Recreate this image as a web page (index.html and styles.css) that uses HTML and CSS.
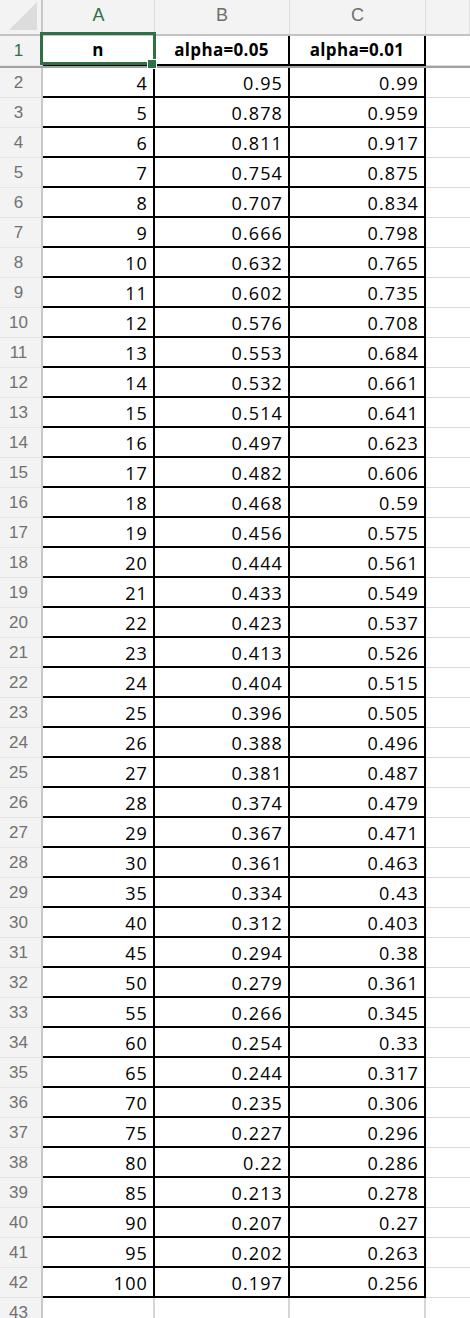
FILE: index.html
```html
<!DOCTYPE html>
<html>
<head>
<meta charset="utf-8">
<link rel="stylesheet" href="styles.css">
</head>
<body>
<div class="sheet">
  <div class="row hdr">
    <div class="corner"><svg width="41" height="32" viewBox="0 0 41 32"><polygon points="9,30 37,30 37,2" fill="#dcdcdc"/></svg></div>
    <div class="ch a sel">A</div>
    <div class="ch b">B</div>
    <div class="ch c">C</div>
    <div class="ch d"></div>
  </div>
  <div class="row r1">
    <div class="rn sel">1</div>
    <div class="cell a head">n</div>
    <div class="cell b head">alpha=0.05</div>
    <div class="cell c head">alpha=0.01</div>
    <div class="cell d"></div>
  </div>
  <div class="freeze"></div>
  <div class="row"><div class="rn">2</div><div class="cell a">4</div><div class="cell b">0.95</div><div class="cell c">0.99</div><div class="cell d"></div></div>
  <div class="row"><div class="rn">3</div><div class="cell a">5</div><div class="cell b">0.878</div><div class="cell c">0.959</div><div class="cell d"></div></div>
  <div class="row"><div class="rn">4</div><div class="cell a">6</div><div class="cell b">0.811</div><div class="cell c">0.917</div><div class="cell d"></div></div>
  <div class="row"><div class="rn">5</div><div class="cell a">7</div><div class="cell b">0.754</div><div class="cell c">0.875</div><div class="cell d"></div></div>
  <div class="row"><div class="rn">6</div><div class="cell a">8</div><div class="cell b">0.707</div><div class="cell c">0.834</div><div class="cell d"></div></div>
  <div class="row"><div class="rn">7</div><div class="cell a">9</div><div class="cell b">0.666</div><div class="cell c">0.798</div><div class="cell d"></div></div>
  <div class="row"><div class="rn">8</div><div class="cell a">10</div><div class="cell b">0.632</div><div class="cell c">0.765</div><div class="cell d"></div></div>
  <div class="row"><div class="rn">9</div><div class="cell a">11</div><div class="cell b">0.602</div><div class="cell c">0.735</div><div class="cell d"></div></div>
  <div class="row"><div class="rn">10</div><div class="cell a">12</div><div class="cell b">0.576</div><div class="cell c">0.708</div><div class="cell d"></div></div>
  <div class="row"><div class="rn">11</div><div class="cell a">13</div><div class="cell b">0.553</div><div class="cell c">0.684</div><div class="cell d"></div></div>
  <div class="row"><div class="rn">12</div><div class="cell a">14</div><div class="cell b">0.532</div><div class="cell c">0.661</div><div class="cell d"></div></div>
  <div class="row"><div class="rn">13</div><div class="cell a">15</div><div class="cell b">0.514</div><div class="cell c">0.641</div><div class="cell d"></div></div>
  <div class="row"><div class="rn">14</div><div class="cell a">16</div><div class="cell b">0.497</div><div class="cell c">0.623</div><div class="cell d"></div></div>
  <div class="row"><div class="rn">15</div><div class="cell a">17</div><div class="cell b">0.482</div><div class="cell c">0.606</div><div class="cell d"></div></div>
  <div class="row"><div class="rn">16</div><div class="cell a">18</div><div class="cell b">0.468</div><div class="cell c">0.59</div><div class="cell d"></div></div>
  <div class="row"><div class="rn">17</div><div class="cell a">19</div><div class="cell b">0.456</div><div class="cell c">0.575</div><div class="cell d"></div></div>
  <div class="row"><div class="rn">18</div><div class="cell a">20</div><div class="cell b">0.444</div><div class="cell c">0.561</div><div class="cell d"></div></div>
  <div class="row"><div class="rn">19</div><div class="cell a">21</div><div class="cell b">0.433</div><div class="cell c">0.549</div><div class="cell d"></div></div>
  <div class="row"><div class="rn">20</div><div class="cell a">22</div><div class="cell b">0.423</div><div class="cell c">0.537</div><div class="cell d"></div></div>
  <div class="row"><div class="rn">21</div><div class="cell a">23</div><div class="cell b">0.413</div><div class="cell c">0.526</div><div class="cell d"></div></div>
  <div class="row"><div class="rn">22</div><div class="cell a">24</div><div class="cell b">0.404</div><div class="cell c">0.515</div><div class="cell d"></div></div>
  <div class="row"><div class="rn">23</div><div class="cell a">25</div><div class="cell b">0.396</div><div class="cell c">0.505</div><div class="cell d"></div></div>
  <div class="row"><div class="rn">24</div><div class="cell a">26</div><div class="cell b">0.388</div><div class="cell c">0.496</div><div class="cell d"></div></div>
  <div class="row"><div class="rn">25</div><div class="cell a">27</div><div class="cell b">0.381</div><div class="cell c">0.487</div><div class="cell d"></div></div>
  <div class="row"><div class="rn">26</div><div class="cell a">28</div><div class="cell b">0.374</div><div class="cell c">0.479</div><div class="cell d"></div></div>
  <div class="row"><div class="rn">27</div><div class="cell a">29</div><div class="cell b">0.367</div><div class="cell c">0.471</div><div class="cell d"></div></div>
  <div class="row"><div class="rn">28</div><div class="cell a">30</div><div class="cell b">0.361</div><div class="cell c">0.463</div><div class="cell d"></div></div>
  <div class="row"><div class="rn">29</div><div class="cell a">35</div><div class="cell b">0.334</div><div class="cell c">0.43</div><div class="cell d"></div></div>
  <div class="row"><div class="rn">30</div><div class="cell a">40</div><div class="cell b">0.312</div><div class="cell c">0.403</div><div class="cell d"></div></div>
  <div class="row"><div class="rn">31</div><div class="cell a">45</div><div class="cell b">0.294</div><div class="cell c">0.38</div><div class="cell d"></div></div>
  <div class="row"><div class="rn">32</div><div class="cell a">50</div><div class="cell b">0.279</div><div class="cell c">0.361</div><div class="cell d"></div></div>
  <div class="row"><div class="rn">33</div><div class="cell a">55</div><div class="cell b">0.266</div><div class="cell c">0.345</div><div class="cell d"></div></div>
  <div class="row"><div class="rn">34</div><div class="cell a">60</div><div class="cell b">0.254</div><div class="cell c">0.33</div><div class="cell d"></div></div>
  <div class="row"><div class="rn">35</div><div class="cell a">65</div><div class="cell b">0.244</div><div class="cell c">0.317</div><div class="cell d"></div></div>
  <div class="row"><div class="rn">36</div><div class="cell a">70</div><div class="cell b">0.235</div><div class="cell c">0.306</div><div class="cell d"></div></div>
  <div class="row"><div class="rn">37</div><div class="cell a">75</div><div class="cell b">0.227</div><div class="cell c">0.296</div><div class="cell d"></div></div>
  <div class="row"><div class="rn">38</div><div class="cell a">80</div><div class="cell b">0.22</div><div class="cell c">0.286</div><div class="cell d"></div></div>
  <div class="row"><div class="rn">39</div><div class="cell a">85</div><div class="cell b">0.213</div><div class="cell c">0.278</div><div class="cell d"></div></div>
  <div class="row"><div class="rn">40</div><div class="cell a">90</div><div class="cell b">0.207</div><div class="cell c">0.27</div><div class="cell d"></div></div>
  <div class="row"><div class="rn">41</div><div class="cell a">95</div><div class="cell b">0.202</div><div class="cell c">0.263</div><div class="cell d"></div></div>
  <div class="row"><div class="rn">42</div><div class="cell a">100</div><div class="cell b">0.197</div><div class="cell c">0.256</div><div class="cell d"></div></div>
  <div class="row empty"><div class="rn">43</div><div class="cell a"></div><div class="cell b"></div><div class="cell c"></div><div class="cell d"></div></div>
  <div class="selection"></div>
  <div class="handle"></div>
</div>
</body>
</html>
```
FILE: styles.css
```css
html, body {
  margin: 0;
  padding: 0;
  background: #ffffff;
}
.sheet {
  position: relative;
  width: 470px;
  height: 1318px;
  overflow: hidden;
  font-family: "Open Sans", "Liberation Sans", sans-serif;
}
.row {
  display: flex;
  height: 30px;
}
.row > div {
  box-sizing: border-box;
  flex: none;
}
.a { width: 112px; }
.b { width: 135px; }
.c { width: 136px; }
.d { flex: 1 1 auto !important; }

/* column header row */
.hdr {
  height: 34px;
  background: #f3f3f3;
  border-bottom: 2px solid #c3c3c3;
}
.corner {
  width: 43px;
  border-right: 2px solid #c8c8c8;
}
.corner svg { display: block; }
.ch {
  border-right: 1px solid #dedede;
  text-align: center;
  font-family: "Liberation Sans", Arial, sans-serif;
  font-size: 18px;
  line-height: 30px;
  color: #6e6e6e;
}
.ch.sel { color: #2f7047; }

/* row numbers */
.rn {
  width: 43px;
  background: #f3f3f3;
  border-right: 2px solid #c8c8c8;
  border-bottom: 1px solid #e6e6e6;
  font-family: "Liberation Sans", Arial, sans-serif;
  font-size: 17px;
  color: #717171;
  text-align: center;
  padding-right: 4px;
  line-height: 30px;
}
.rn.sel { color: #2f7047; }

/* cells */
.cell {
  border-right: 2px solid #000;
  border-bottom: 2px solid #000;
  text-align: right;
  padding: 3px 5px 0 0;
  font-size: 18px;
  letter-spacing: 1.1px;
  line-height: 25px;
  color: #000;
  white-space: nowrap;
  overflow: hidden;
}
.cell.d {
  border-right: none;
  border-bottom: 1px solid #dadada;
}
.cell.head {
  font-weight: 700;
  text-align: center;
  padding: 0;
  line-height: 28px;
  letter-spacing: 0.3px;
  font-size: 17px;
}
.freeze {
  height: 2px;
  background: #a2a2a2;
}
.empty { height: 22px; }
.empty .cell {
  border-right: 2px solid #d6d6d6;
  border-bottom: none;
}
.empty .cell.d { border-right: none; }

/* selection overlay */
.selection {
  position: absolute;
  left: 40px;
  top: 32px;
  width: 116px;
  height: 33px;
  box-sizing: border-box;
  border: 3px solid #2f7047;
}
.handle {
  position: absolute;
  left: 147px;
  top: 59px;
  width: 10px;
  height: 10px;
  box-sizing: border-box;
  background: #2f7047;
  border: 1px solid #ffffff;
}
```
